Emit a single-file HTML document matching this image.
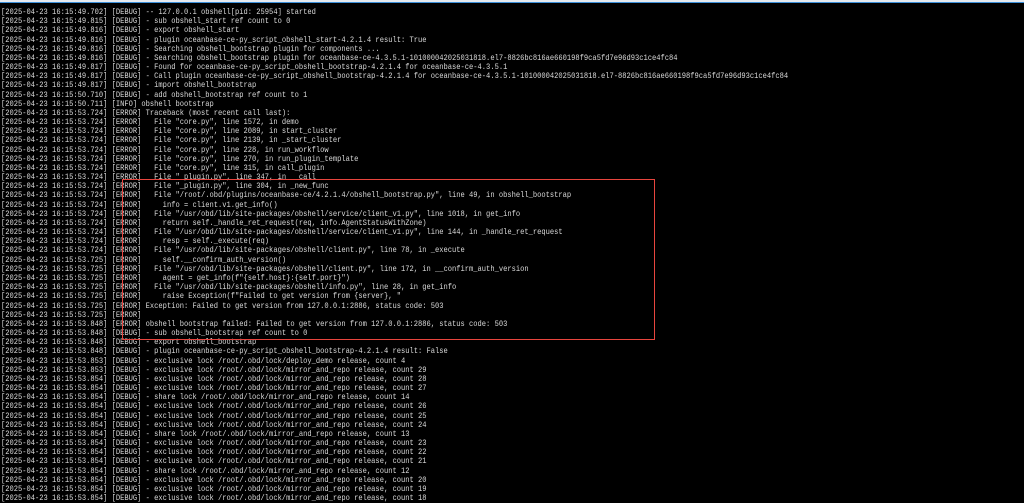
<!DOCTYPE html>
<html><head><meta charset="utf-8"><style>
html,body{margin:0;padding:0;background:#000;width:1024px;height:501px;overflow:hidden}
.top1{position:absolute;left:0;top:0;width:1024px;height:2px;background:#e6e9ee}
.top2{position:absolute;left:0;top:2px;width:1024px;height:1px;background:#3c8fd8}
pre{position:absolute;left:1px;top:8px;margin:0;font-family:"Liberation Mono",monospace;font-size:8.2px;line-height:9.17px;color:#d8d8d8;white-space:pre;transform:scaleX(0.866);transform-origin:0 0}
.box{position:absolute;left:122px;top:179px;width:531px;height:159px;border:1.5px solid #e8453e}
</style></head><body>
<div class="top1"></div><div class="top2"></div>
<pre>[2025-04-23 16:15:49.702] [DEBUG] -- 127.0.0.1 obshell[pid: 25954] started
[2025-04-23 16:15:49.815] [DEBUG] - sub obshell_start ref count to 0
[2025-04-23 16:15:49.816] [DEBUG] - export obshell_start
[2025-04-23 16:15:49.816] [DEBUG] - plugin oceanbase-ce-py_script_obshell_start-4.2.1.4 result: True
[2025-04-23 16:15:49.816] [DEBUG] - Searching obshell_bootstrap plugin for components ...
[2025-04-23 16:15:49.816] [DEBUG] - Searching obshell_bootstrap plugin for oceanbase-ce-4.3.5.1-101000042025031818.el7-8826bc816ae660198f9ca5fd7e96d93c1ce4fc84
[2025-04-23 16:15:49.817] [DEBUG] - Found for oceanbase-ce-py_script_obshell_bootstrap-4.2.1.4 for oceanbase-ce-4.3.5.1
[2025-04-23 16:15:49.817] [DEBUG] - Call plugin oceanbase-ce-py_script_obshell_bootstrap-4.2.1.4 for oceanbase-ce-4.3.5.1-101000042025031818.el7-8826bc816ae660198f9ca5fd7e96d93c1ce4fc84
[2025-04-23 16:15:49.817] [DEBUG] - import obshell_bootstrap
[2025-04-23 16:15:50.710] [DEBUG] - add obshell_bootstrap ref count to 1
[2025-04-23 16:15:50.711] [INFO] obshell bootstrap
[2025-04-23 16:15:53.724] [ERROR] Traceback (most recent call last):
[2025-04-23 16:15:53.724] [ERROR]   File "core.py", line 1572, in demo
[2025-04-23 16:15:53.724] [ERROR]   File "core.py", line 2089, in start_cluster
[2025-04-23 16:15:53.724] [ERROR]   File "core.py", line 2139, in _start_cluster
[2025-04-23 16:15:53.724] [ERROR]   File "core.py", line 228, in run_workflow
[2025-04-23 16:15:53.724] [ERROR]   File "core.py", line 270, in run_plugin_template
[2025-04-23 16:15:53.724] [ERROR]   File "core.py", line 315, in call_plugin
[2025-04-23 16:15:53.724] [ERROR]   File "_plugin.py", line 347, in __call__
[2025-04-23 16:15:53.724] [ERROR]   File "_plugin.py", line 304, in _new_func
[2025-04-23 16:15:53.724] [ERROR]   File "/root/.obd/plugins/oceanbase-ce/4.2.1.4/obshell_bootstrap.py", line 49, in obshell_bootstrap
[2025-04-23 16:15:53.724] [ERROR]     info = client.v1.get_info()
[2025-04-23 16:15:53.724] [ERROR]   File "/usr/obd/lib/site-packages/obshell/service/client_v1.py", line 1018, in get_info
[2025-04-23 16:15:53.724] [ERROR]     return self._handle_ret_request(req, info.AgentStatusWithZone)
[2025-04-23 16:15:53.724] [ERROR]   File "/usr/obd/lib/site-packages/obshell/service/client_v1.py", line 144, in _handle_ret_request
[2025-04-23 16:15:53.724] [ERROR]     resp = self._execute(req)
[2025-04-23 16:15:53.724] [ERROR]   File "/usr/obd/lib/site-packages/obshell/client.py", line 78, in _execute
[2025-04-23 16:15:53.725] [ERROR]     self.__confirm_auth_version()
[2025-04-23 16:15:53.725] [ERROR]   File "/usr/obd/lib/site-packages/obshell/client.py", line 172, in __confirm_auth_version
[2025-04-23 16:15:53.725] [ERROR]     agent = get_info(f"{self.host}:{self.port}")
[2025-04-23 16:15:53.725] [ERROR]   File "/usr/obd/lib/site-packages/obshell/info.py", line 28, in get_info
[2025-04-23 16:15:53.725] [ERROR]     raise Exception(f"Failed to get version from {server}, "
[2025-04-23 16:15:53.725] [ERROR] Exception: Failed to get version from 127.0.0.1:2886, status code: 503
[2025-04-23 16:15:53.725] [ERROR]
[2025-04-23 16:15:53.848] [ERROR] obshell bootstrap failed: Failed to get version from 127.0.0.1:2886, status code: 503
[2025-04-23 16:15:53.848] [DEBUG] - sub obshell_bootstrap ref count to 0
[2025-04-23 16:15:53.848] [DEBUG] - export obshell_bootstrap
[2025-04-23 16:15:53.848] [DEBUG] - plugin oceanbase-ce-py_script_obshell_bootstrap-4.2.1.4 result: False
[2025-04-23 16:15:53.853] [DEBUG] - exclusive lock /root/.obd/lock/deploy_demo release, count 4
[2025-04-23 16:15:53.853] [DEBUG] - exclusive lock /root/.obd/lock/mirror_and_repo release, count 29
[2025-04-23 16:15:53.854] [DEBUG] - exclusive lock /root/.obd/lock/mirror_and_repo release, count 28
[2025-04-23 16:15:53.854] [DEBUG] - exclusive lock /root/.obd/lock/mirror_and_repo release, count 27
[2025-04-23 16:15:53.854] [DEBUG] - share lock /root/.obd/lock/mirror_and_repo release, count 14
[2025-04-23 16:15:53.854] [DEBUG] - exclusive lock /root/.obd/lock/mirror_and_repo release, count 26
[2025-04-23 16:15:53.854] [DEBUG] - exclusive lock /root/.obd/lock/mirror_and_repo release, count 25
[2025-04-23 16:15:53.854] [DEBUG] - exclusive lock /root/.obd/lock/mirror_and_repo release, count 24
[2025-04-23 16:15:53.854] [DEBUG] - share lock /root/.obd/lock/mirror_and_repo release, count 13
[2025-04-23 16:15:53.854] [DEBUG] - exclusive lock /root/.obd/lock/mirror_and_repo release, count 23
[2025-04-23 16:15:53.854] [DEBUG] - exclusive lock /root/.obd/lock/mirror_and_repo release, count 22
[2025-04-23 16:15:53.854] [DEBUG] - exclusive lock /root/.obd/lock/mirror_and_repo release, count 21
[2025-04-23 16:15:53.854] [DEBUG] - share lock /root/.obd/lock/mirror_and_repo release, count 12
[2025-04-23 16:15:53.854] [DEBUG] - exclusive lock /root/.obd/lock/mirror_and_repo release, count 20
[2025-04-23 16:15:53.854] [DEBUG] - exclusive lock /root/.obd/lock/mirror_and_repo release, count 19
[2025-04-23 16:15:53.854] [DEBUG] - exclusive lock /root/.obd/lock/mirror_and_repo release, count 18</pre>
<div class="box"></div>
</body></html>
